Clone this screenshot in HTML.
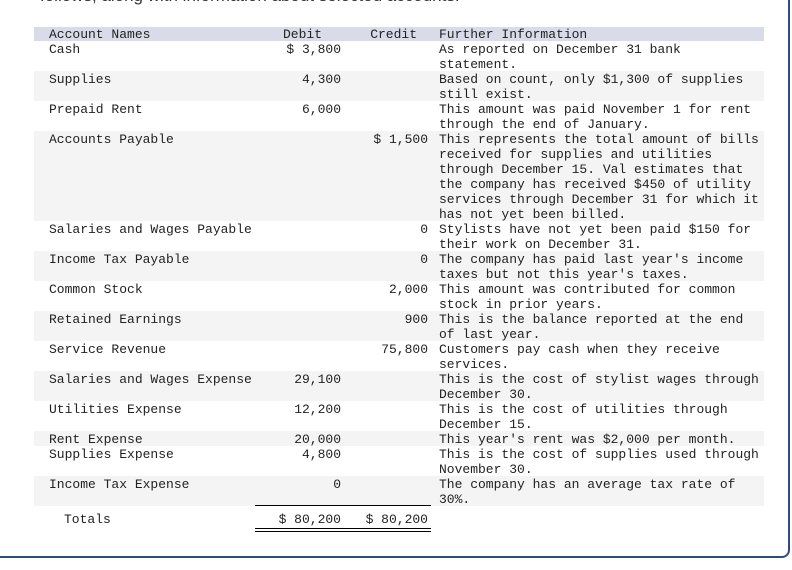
<!DOCTYPE html>
<html><head><meta charset="utf-8"><style>
body{margin:0;width:792px;height:570px;overflow:hidden;background:#fff;position:relative;font-family:"Liberation Mono",monospace;font-size:13px;color:#222}
.top{position:absolute;left:40px;top:-14px;font-family:"Liberation Sans",sans-serif;font-size:17px;color:#333;white-space:nowrap}
.card{position:absolute;left:-10px;top:-20px;width:800px;height:578px;border:2px solid #2b4d80;border-radius:8px;box-sizing:border-box}
.r{position:absolute;left:34px;width:730px;line-height:15px}
.r span{top:1px}
.g{background:#f4f4f4}
.h{background:#d9dce8}
.n{position:absolute;left:15px;top:0}
.d{position:absolute;right:423px;top:0;text-align:right}
.c{position:absolute;right:336px;top:0;text-align:right}
.i{position:absolute;left:405px;top:0;white-space:pre}
.ln{position:absolute;left:255px;width:176px;height:1px;background:#000}
</style></head><body>
<div class="top">follows, along with information about selected accounts.</div>
<div class="card"></div>
<div class="r h" style="top:27px;height:14px;line-height:14px"><span class="n">Account Names</span><span class="d" style="right:442px">Debit</span><span class="c" style="right:347px">Credit</span><span class="i">Further Information</span></div>
<div class="r" style="top:41px;height:30px"><span class="n">Cash</span><span class="d">$ 3,800</span><span class="i">As reported on December 31 bank
statement.</span></div>
<div class="r g" style="top:71px;height:30px"><span class="n">Supplies</span><span class="d">4,300</span><span class="i">Based on count, only $1,300 of supplies
still exist.</span></div>
<div class="r" style="top:101px;height:30px"><span class="n">Prepaid Rent</span><span class="d">6,000</span><span class="i">This amount was paid November 1 for rent
through the end of January.</span></div>
<div class="r g" style="top:131px;height:90px"><span class="n">Accounts Payable</span><span class="c">$ 1,500</span><span class="i">This represents the total amount of bills
received for supplies and utilities
through December 15. Val estimates that
the company has received $450 of utility
services through December 31 for which it
has not yet been billed.</span></div>
<div class="r" style="top:221px;height:30px"><span class="n">Salaries and Wages Payable</span><span class="c">0</span><span class="i">Stylists have not yet been paid $150 for
their work on December 31.</span></div>
<div class="r g" style="top:251px;height:30px"><span class="n">Income Tax Payable</span><span class="c">0</span><span class="i">The company has paid last year's income
taxes but not this year's taxes.</span></div>
<div class="r" style="top:281px;height:30px"><span class="n">Common Stock</span><span class="c">2,000</span><span class="i">This amount was contributed for common
stock in prior years.</span></div>
<div class="r g" style="top:311px;height:30px"><span class="n">Retained Earnings</span><span class="c">900</span><span class="i">This is the balance reported at the end
of last year.</span></div>
<div class="r" style="top:341px;height:30px"><span class="n">Service Revenue</span><span class="c">75,800</span><span class="i">Customers pay cash when they receive
services.</span></div>
<div class="r g" style="top:371px;height:30px"><span class="n">Salaries and Wages Expense</span><span class="d">29,100</span><span class="i">This is the cost of stylist wages through
December 30.</span></div>
<div class="r" style="top:401px;height:30px"><span class="n">Utilities Expense</span><span class="d">12,200</span><span class="i">This is the cost of utilities through
December 15.</span></div>
<div class="r g" style="top:431px;height:15px"><span class="n">Rent Expense</span><span class="d">20,000</span><span class="i">This year's rent was $2,000 per month.</span></div>
<div class="r" style="top:446px;height:30px"><span class="n">Supplies Expense</span><span class="d">4,800</span><span class="i">This is the cost of supplies used through
November 30.</span></div>
<div class="r g" style="top:476px;height:30px"><span class="n">Income Tax Expense</span><span class="d">0</span><span class="i">The company has an average tax rate of
30%.</span></div>
<div class="ln" style="top:505px"></div>
<div class="r" style="top:511px;height:15px"><span class="n" style="left:30px">Totals</span><span class="d">$ 80,200</span><span class="c">$ 80,200</span></div>
<div class="ln" style="top:528px"></div>
<div class="ln" style="top:531px"></div>
</body></html>
